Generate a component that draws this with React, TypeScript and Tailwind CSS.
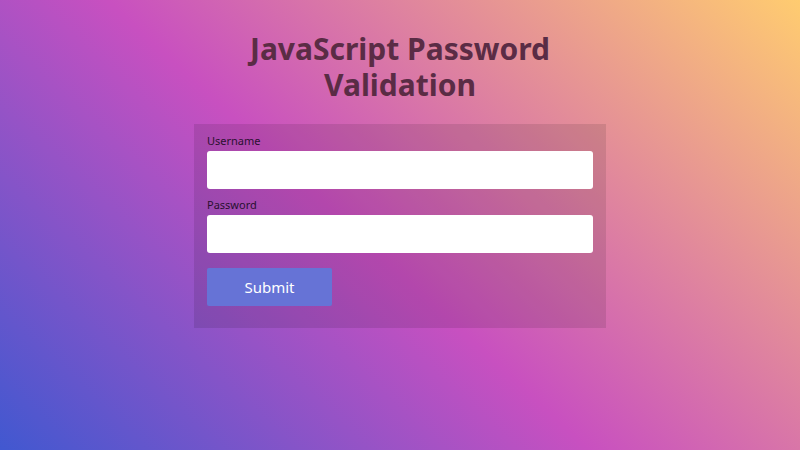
// Password validation form on a gradient background.

const FONT = { fontFamily: '"Noto Sans", "Open Sans", sans-serif' };

function Field({ label, type }: { label: string; type: string }) {
  return (
    <div className="flex flex-col">
      <label className="text-[11px] leading-[14px] mb-[3px] text-[#2a1030]">{label}</label>
      <input type={type} className="h-[38px] w-full rounded-[3px] bg-white outline-none px-2 text-sm" />
    </div>
  );
}

export default function App() {
  return (
    <div
      className="w-[800px] h-[450px] overflow-hidden flex flex-col items-center bg-[linear-gradient(43deg,#4158D0_0%,#C850C0_46%,#FFCC70_100%)]"
      style={FONT}
    >
      <h1 className="mt-[31px] text-[30px] leading-[36px] font-bold text-[#5a2c45] text-center w-[340px]">
        JavaScript Password Validation
      </h1>

      <form className="mt-[21px] w-[412px] bg-black/10 px-[13px] pt-[10px] pb-[22px] flex flex-col">
        <div className="flex flex-col gap-[9px]">
          <Field label="Username" type="text" />
          <Field label="Password" type="password" />
        </div>
        <button
          type="button"
          className="mt-[15px] w-[125px] h-[38px] rounded-[2px] bg-[#6673d6] text-white text-[15px]"
        >
          Submit
        </button>
      </form>
    </div>
  );
}
